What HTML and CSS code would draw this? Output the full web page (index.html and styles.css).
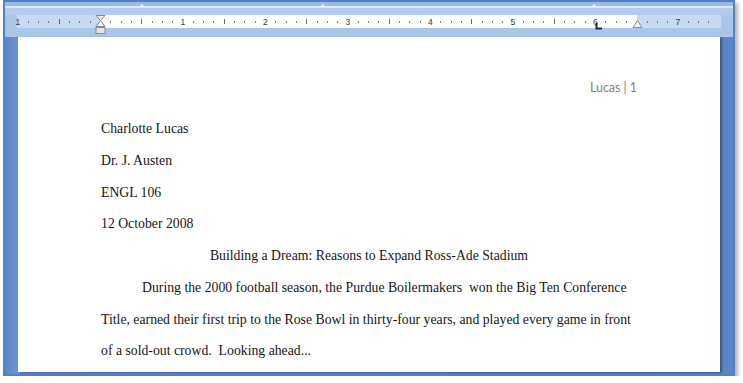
FILE: index.html
```html
<!DOCTYPE html>
<html>
<head>
    <title>Ross-Ade Stadium Essay</title>
    <link rel="stylesheet" href="styles.css">
</head>
<body>
    <div class="window">
        <div class="chrome">
            <div class="strip">
                <span class="pin pin-a"></span>
                <span class="pin pin-b"></span>
                <span class="pin pin-c"></span>
            </div>
            <div class="ruler">
                <div class="marks">
                    <span class="n">1</span><span class="d"></span><span class="d"></span><span class="d"></span><span class="t"></span><span class="d"></span><span class="d"></span><span class="d"></span>
                    <span class="e"></span><span class="d"></span><span class="d"></span><span class="d"></span><span class="t"></span><span class="d"></span><span class="d"></span><span class="d"></span>
                    <span class="n">1</span><span class="d"></span><span class="d"></span><span class="d"></span><span class="t"></span><span class="d"></span><span class="d"></span><span class="d"></span>
                    <span class="n">2</span><span class="d"></span><span class="d"></span><span class="d"></span><span class="t"></span><span class="d"></span><span class="d"></span><span class="d"></span>
                    <span class="n">3</span><span class="d"></span><span class="d"></span><span class="d"></span><span class="t"></span><span class="d"></span><span class="d"></span><span class="d"></span>
                    <span class="n">4</span><span class="d"></span><span class="d"></span><span class="d"></span><span class="t"></span><span class="d"></span><span class="d"></span><span class="d"></span>
                    <span class="n">5</span><span class="d"></span><span class="d"></span><span class="d"></span><span class="t"></span><span class="d"></span><span class="d"></span><span class="d"></span>
                    <span class="n">6</span><span class="d"></span><span class="d"></span><span class="d"></span><span class="e"></span><span class="d"></span><span class="d"></span><span class="d"></span>
                    <span class="n">7</span><span class="d"></span><span class="d"></span><span class="d"></span>
                </div>
                <svg class="hourglass" width="11" height="19" viewBox="0 0 11 19">
                    <path d="M1 0.5 H10 L5.5 5.5 Z" fill="#f2f2f2" stroke="#8c8c8c"/>
                    <path d="M5.5 5.5 L10 11.5 H1 Z" fill="#f2f2f2" stroke="#8c8c8c"/>
                    <rect x="1" y="12.5" width="9" height="6" fill="#e6e6e6" stroke="#8c8c8c"/>
                </svg>
                <svg class="tab" width="8" height="7" viewBox="0 0 8 7">
                    <path d="M1.5 0 V5.5 H7" fill="none" stroke="#1f2a3a" stroke-width="2"/>
                </svg>
                <svg class="right-indent" width="11" height="8" viewBox="0 0 11 8">
                    <path d="M5.5 0.5 L10 7.5 H1 Z" fill="#f4f4f4" stroke="#8c8c8c"/>
                </svg>
            </div>
        </div>
        <div class="doc-area">
            <div class="page">
                <div class="running-head">Lucas | 1</div>
                <p class="line">Charlotte Lucas</p>
                <p class="line">Dr. J. Austen</p>
                <p class="line">ENGL 106</p>
                <p class="line">12 October 2008</p>
                <p class="line title">Building a Dream: Reasons to Expand Ross-Ade Stadium</p>
                <p class="line indent">During the 2000 football season, the Purdue Boilermakers&nbsp; won the Big Ten Conference</p>
                <p class="line">Title, earned their first trip to the Rose Bowl in thirty-four years, and played every game in front</p>
                <p class="line">of a sold-out crowd.&nbsp; Looking ahead...</p>
            </div>
        </div>
    </div>
</body>
</html>
```

FILE: styles.css
```css
body {
    margin: 0;
    padding: 0;
    background-color: #ffffff;
    font-family: "Liberation Serif", "Times New Roman", serif;
}

.window {
    margin-left: 3px;
    width: 732px;
    height: 376px;
    box-sizing: border-box;
    border: 2px solid #5282c3;
    display: flex;
    flex-direction: column;
    box-shadow: 3px 3px 4px rgba(0, 0, 0, 0.3);
}

.chrome {
    height: 35px;
    background-color: #abc5e9;
}

.strip {
    position: relative;
    height: 13px;
    box-sizing: border-box;
    background: linear-gradient(to bottom, #97b7e3 0, #9fbde6 4px, #d6edf8 4px, #d6edf8 6px, #b2cbee 6px);
}

.pin {
    position: absolute;
    top: 2px;
    width: 0;
    height: 0;
    border-left: 3px solid transparent;
    border-right: 3px solid transparent;
    border-bottom: 3px solid #eef4fb;
}

.pin-a { left: 134px; }
.pin-b { left: 315px; }
.pin-c { left: 586px; }

.ruler {
    position: relative;
    margin-left: 12px;
    width: 704px;
    height: 13px;
    background: linear-gradient(to right, #c8d9f1 83px, #ffffff 83px, #ffffff 620px, #c8d9f1 620px);
}

.marks {
    position: absolute;
    left: -4.2px;
    top: 0;
    display: flex;
}

.marks span {
    flex: 0 0 10.3125px;
    height: 13px;
    display: flex;
    justify-content: center;
    align-items: center;
}

.marks .d::after {
    content: "";
    width: 1px;
    height: 2px;
    background-color: #7a7a7a;
}

.marks .t::after {
    content: "";
    width: 1px;
    height: 5px;
    background-color: #6a6a6a;
}

.marks .n {
    font-family: "Liberation Sans", Arial, sans-serif;
    font-size: 8.5px;
    color: #3a3a3a;
}

.hourglass {
    position: absolute;
    left: 78px;
    top: 0;
}

.tab {
    position: absolute;
    left: 578px;
    top: 8px;
}

.right-indent {
    position: absolute;
    left: 615px;
    top: 5px;
}

.doc-area {
    flex: 1;
    display: flex;
    background: linear-gradient(to right, #5a85c6 0, #6c94d0 13px, #5b86c6 715px, #5b86c6 728px);
}

.page {
    margin-left: 13px;
    width: 702px;
    height: 335px;
    box-sizing: border-box;
    padding: 43px 83px 0 83px;
    background-color: #ffffff;
    box-shadow: 2px 1px 2px rgba(40, 50, 70, 0.55);
    overflow: hidden;
    color: #161616;
}

.running-head {
    height: 15px;
    margin-bottom: 18px;
    text-align: right;
    font-family: Lato, "Open Sans", sans-serif;
    font-size: 12.4px;
    line-height: 15px;
    color: #7f7f7f;
}

.line {
    margin: 0;
    font-size: 13.75px;
    line-height: 31.75px;
    white-space: nowrap;
}

.title {
    text-align: center;
}

.indent {
    text-indent: 41px;
}
```
